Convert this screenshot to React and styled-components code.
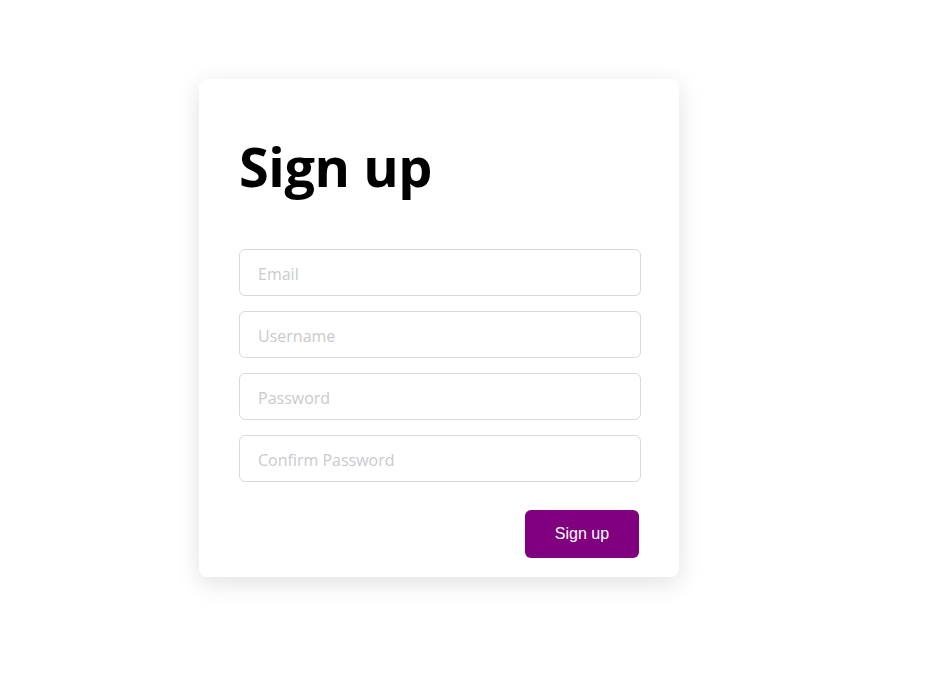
import React from "react";
import styled, { createGlobalStyle } from "styled-components";

const Global = createGlobalStyle`
  html, body { margin: 0; padding: 0; background: #ffffff; }
  body { font-family: "Open Sans", "Noto Sans", sans-serif; }
  * { box-sizing: border-box; }
`;

const Page = styled.div`
  min-height: 691px;
  padding: 79px 0 0 199px;
`;

const Card = styled.form`
  width: 480px;
  height: 498px;
  background: #ffffff;
  border-radius: 8px;
  box-shadow: 0 6px 24px rgba(0, 0, 0, 0.12);
  padding: 52px 38px 19px 40px;
  display: flex;
  flex-direction: column;
`;

const Title = styled.h1`
  margin: 0 0 48px;
  font-family: "Open Sans", "Noto Sans", sans-serif;
  font-weight: 700;
  font-size: 54px;
  line-height: 70px;
  color: #000;
  letter-spacing: -0.4px;
`;

const Fields = styled.div`
  display: flex;
  flex-direction: column;
  gap: 15px;
  width: 402px;
`;

const Input = styled.input`
  width: 100%;
  height: 47px;
  border: 1px solid #d9d9d9;
  border-radius: 6px;
  padding: 3px 18px 0;
  font-family: "Open Sans", "Noto Sans", sans-serif;
  font-size: 16px;
  color: #333;
  outline: none;
  &::placeholder { color: #cacace; }
`;

const Actions = styled.div`
  display: flex;
  justify-content: flex-end;
  width: 400px;
  margin-top: 28px;
`;

const Button = styled.button`
  width: 114px;
  height: 48px;
  border: none;
  border-radius: 6px;
  background: #800080;
  color: #fff;
  font-family: "Liberation Sans", Arial, sans-serif;
  font-size: 16px;
  cursor: pointer;
`;

export default function App() {
  return (
    <>
      <Global />
      <Page>
        <Card onSubmit={(e) => e.preventDefault()}>
          <Title>Sign up</Title>
          <Fields>
            <Input type="email" placeholder="Email" />
            <Input type="text" placeholder="Username" />
            <Input type="password" placeholder="Password" />
            <Input type="password" placeholder="Confirm Password" />
          </Fields>
          <Actions>
            <Button type="submit">Sign up</Button>
          </Actions>
        </Card>
      </Page>
    </>
  );
}
